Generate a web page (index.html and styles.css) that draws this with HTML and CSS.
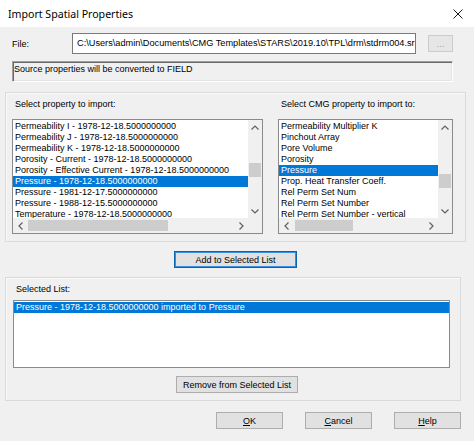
FILE: index.html
```html
<!DOCTYPE html>
<html>

<head>
    <link rel="stylesheet" href="styles.css">
</head>

<body>

    <div class="titlebar">
        <span class="title">Import Spatial Properties</span>
        <svg class="close" width="10" height="10" viewBox="0 0 10 10">
            <path d="M0.5 0.5 L9.5 9.5 M9.5 0.5 L0.5 9.5" stroke="#1a1a1a" stroke-width="1" fill="none" />
        </svg>
    </div>

    <div class="content">
        <div class="file-row">
            <span class="file-label">File:</span>
            <div class="textbox">C:\Users\admin\Documents\CMG Templates\STARS\2019.10\TPL\drm\stdrm004.sr3</div>
            <button class="btn browse">...</button>
        </div>

        <div class="info">Source properties will be converted to FIELD</div>

        <!-- pick source and target -->
        <div class="group pick-group">
            <div class="pick-col source-col">
                <div class="caption">Select property to import:</div>
                <div class="listbox">
                    <div class="items">
                        <div class="item">Permeability I - 1978-12-18.5000000000</div>
                        <div class="item">Permeability J - 1978-12-18.5000000000</div>
                        <div class="item">Permeability K - 1978-12-18.5000000000</div>
                        <div class="item">Porosity - Current - 1978-12-18.5000000000</div>
                        <div class="item">Porosity - Effective Current - 1978-12-18.5000000000</div>
                        <div class="item selected">Pressure - 1978-12-18.5000000000</div>
                        <div class="item">Pressure - 1981-12-17.5000000000</div>
                        <div class="item">Pressure - 1988-12-15.5000000000</div>
                        <div class="item">Temperature - 1978-12-18.5000000000</div>
                    </div>
                    <div class="vscroll">
                        <div class="arrow"><svg width="8" height="5" viewBox="0 0 8 5"><path d="M0.5 4.5 L4 1 L7.5 4.5" /></svg></div>
                        <div class="track"><div class="thumb" style="margin-top: 29px"></div></div>
                        <div class="arrow"><svg width="8" height="5" viewBox="0 0 8 5"><path d="M0.5 0.5 L4 4 L7.5 0.5" /></svg></div>
                    </div>
                    <div class="hscroll">
                        <div class="arrow"><svg width="5" height="8" viewBox="0 0 5 8"><path d="M4.5 0.5 L1 4 L4.5 7.5" /></svg></div>
                        <div class="track"><div class="thumb" style="margin-left: 1px; width: 140px"></div></div>
                        <div class="arrow"><svg width="5" height="8" viewBox="0 0 5 8"><path d="M0.5 0.5 L4 4 L0.5 7.5" /></svg></div>
                    </div>
                    <div class="corner"></div>
                </div>
            </div>

            <div class="pick-col target-col">
                <div class="caption">Select CMG property to import to:</div>
                <div class="listbox">
                    <div class="items">
                        <div class="item">Permeability Multiplier K</div>
                        <div class="item">Pinchout Array</div>
                        <div class="item">Pore Volume</div>
                        <div class="item">Porosity</div>
                        <div class="item selected">Pressure</div>
                        <div class="item">Prop. Heat Transfer Coeff.</div>
                        <div class="item">Rel Perm Set Num</div>
                        <div class="item">Rel Perm Set Number</div>
                        <div class="item">Rel Perm Set Number - vertical</div>
                    </div>
                    <div class="vscroll">
                        <div class="arrow"><svg width="8" height="5" viewBox="0 0 8 5"><path d="M0.5 4.5 L4 1 L7.5 4.5" /></svg></div>
                        <div class="track"><div class="thumb" style="margin-top: 40px"></div></div>
                        <div class="arrow"><svg width="8" height="5" viewBox="0 0 8 5"><path d="M0.5 0.5 L4 4 L7.5 0.5" /></svg></div>
                    </div>
                    <div class="hscroll">
                        <div class="arrow"><svg width="5" height="8" viewBox="0 0 5 8"><path d="M4.5 0.5 L1 4 L4.5 7.5" /></svg></div>
                        <div class="track"><div class="thumb" style="margin-left: 2px; width: 58px"></div></div>
                        <div class="arrow"><svg width="5" height="8" viewBox="0 0 5 8"><path d="M0.5 0.5 L4 4 L0.5 7.5" /></svg></div>
                    </div>
                    <div class="corner"></div>
                </div>
            </div>
        </div>

        <div class="add-row">
            <button class="btn default add-btn">Add to Selected List</button>
        </div>

        <!-- selected list -->
        <div class="group selected-group">
            <div class="caption">Selected List:</div>
            <div class="selected-list">
                <div class="item selected">Pressure - 1978-12-18.5000000000 imported to Pressure</div>
            </div>
            <button class="btn remove-btn">Remove from Selected List</button>
        </div>

        <div class="footer">
            <button class="btn"><u>O</u>K</button>
            <button class="btn"><u>C</u>ancel</button>
            <button class="btn"><u>H</u>elp</button>
        </div>
    </div>

</body>

</html>
```

FILE: styles.css
```css
* {
    box-sizing: border-box;
}

body {
    margin: 0;
    width: 474px;
    height: 441px;
    overflow: hidden;
    font-family: "Liberation Sans", Arial, sans-serif;
    font-size: 9px;
    color: #000;
    background-color: #f0f0f0;
}

.titlebar {
    height: 27px;
    background-color: #fff;
    display: flex;
    align-items: center;
    padding-left: 8px;
}

.title {
    font-family: "Noto Sans", sans-serif;
    font-size: 10.6px;
    color: #000;
}

.close {
    margin-left: auto;
    margin-right: 11px;
}

.content {
    padding-top: 6px;
}

.file-row {
    display: flex;
    align-items: center;
    height: 21px;
    margin-left: 12px;
}

.file-label {
    width: 60px;
}

.textbox {
    width: 344px;
    height: 21px;
    border: 1px solid #7a7a7a;
    background-color: #fff;
    padding-left: 4px;
    font-size: 9.2px;
    line-height: 19px;
    white-space: nowrap;
    overflow: hidden;
}

.btn {
    height: 17px;
    padding: 0;
    border: 1px solid #adadad;
    background-color: #e1e1e1;
    font-family: inherit;
    font-size: 9px;
    color: #000;
}

.btn.default {
    border-color: #0a64b4;
    box-shadow: inset 0 0 0 1px #3a8fdc;
}

.browse {
    margin-left: 12px;
    width: 25px;
    border-color: #cccccc;
    background-color: #e6e6e6;
    color: #a0a0a0;
}

.info {
    margin: 7px 0 0 12px;
    width: 441px;
    height: 21px;
    border: 1px solid;
    border-color: #a0a0a0 #fff #fff #a0a0a0;
    box-shadow: inset 1px 1px 0 #696969, inset -1px -1px 0 #e3e3e3;
    padding: 2px 0 0 1px;
    line-height: 11px;
}

/* group boxes */
.group {
    border: 1px solid #dadada;
    box-shadow: inset 1px 1px 0 #fbfbfb;
    margin-left: 5px;
}

.caption {
    height: 11px;
    line-height: 11px;
    padding-left: 3px;
    margin-bottom: 9px;
}

.pick-group {
    margin-top: 10px;
    width: 461px;
    height: 150px;
    padding: 6px 12px 0 6px;
    display: flex;
    gap: 15px;
}

.source-col {
    width: 251px;
}

.target-col {
    width: 175px;
}

.listbox {
    height: 115px;
    border: 1px solid #8a8a8a;
    background-color: #fff;
    display: grid;
    grid-template-columns: 1fr 14px;
    grid-template-rows: 98px 15px;
}

.items {
    padding-top: 1px;
    overflow: hidden;
}

.item {
    height: 11px;
    line-height: 11px;
    padding-left: 2px;
    white-space: nowrap;
}

.item.selected {
    background-color: #0078d7;
    color: #fff;
}

/* scrollbars */
.vscroll,
.hscroll,
.corner {
    background-color: #f0f0f0;
}

.vscroll {
    display: flex;
    flex-direction: column;
}

.vscroll .arrow {
    height: 14px;
}

.hscroll {
    display: flex;
}

.hscroll .arrow {
    width: 14px;
}

.arrow {
    display: flex;
    align-items: center;
    justify-content: center;
}

.arrow path {
    fill: none;
    stroke: #606060;
    stroke-width: 1.2;
}

.vscroll .track {
    flex: 1;
}

.vscroll .thumb {
    width: 12px;
    height: 14px;
    margin-left: 1px;
    background-color: #cdcdcd;
}

.hscroll .track {
    flex: 1;
    display: flex;
    align-items: center;
}

.hscroll .thumb {
    height: 11px;
    background-color: #cdcdcd;
}

.add-row {
    margin: 9px 0 0 174px;
    height: 17px;
    display: flex;
}

.add-btn {
    width: 123px;
}

.selected-group {
    margin-top: 9px;
    width: 456px;
    height: 124px;
    padding: 6px 0 0 7px;
}

.selected-group .caption {
    margin-bottom: 5px;
}

.selected-list {
    width: 437px;
    height: 68px;
    border: 1px solid #8a8a8a;
    background-color: #fff;
    padding-top: 1px;
}

.remove-btn {
    display: block;
    margin: 8px 0 0 163px;
    width: 122px;
}

.footer {
    margin-top: 11px;
    display: flex;
    justify-content: flex-end;
    gap: 22px;
    padding-right: 13px;
}

.footer .btn {
    width: 67px;
}
```
